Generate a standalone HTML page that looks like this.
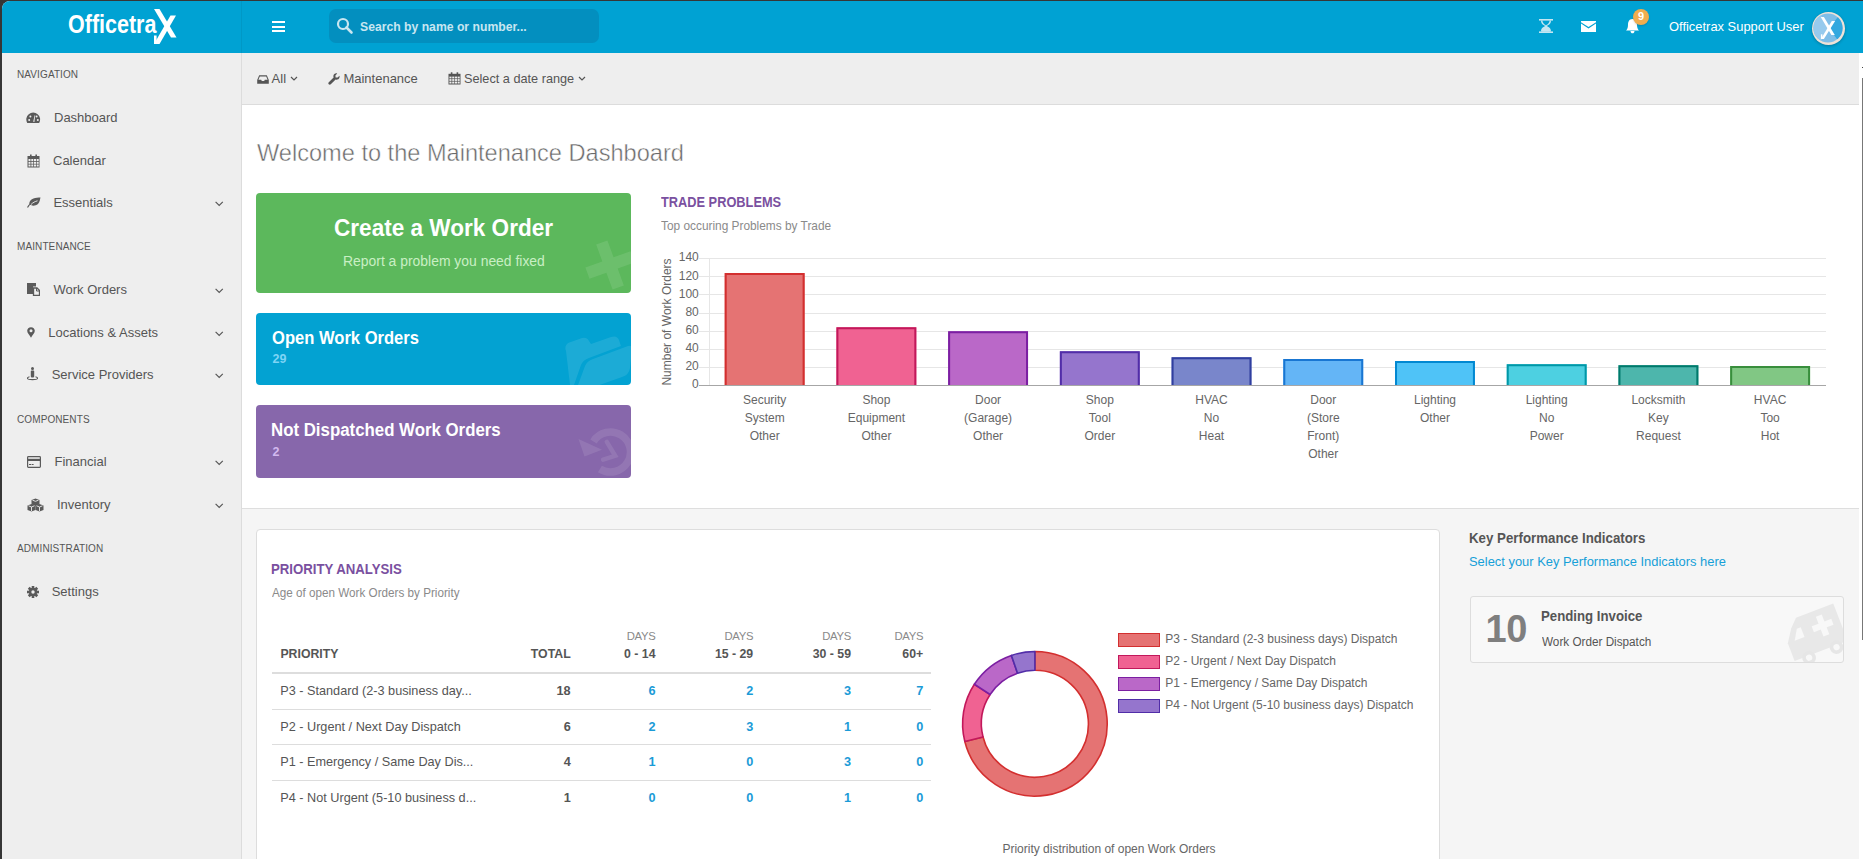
<!DOCTYPE html>
<html><head><meta charset="utf-8">
<style>
*{box-sizing:border-box;margin:0;padding:0}
html,body{width:1863px;height:859px;overflow:hidden;background:#363636;font-family:"Liberation Sans",sans-serif}
.a{position:absolute}
.t{position:absolute;white-space:nowrap;line-height:1}
#bg{position:absolute;left:2px;top:1px;width:1861px;height:858px;background:#fff;border-top-left-radius:8px}
#hdr{position:absolute;left:2px;top:1px;width:1861px;height:52px;background:#00a2d3;border-top-left-radius:8px}
#side{position:absolute;left:2px;top:53px;width:240px;height:806px;background:#eeeeee;border-right:1px solid #dcdcdc}
#sub{position:absolute;left:242px;top:53px;width:1617px;height:52px;background:#eeeeee;border-bottom:1px solid #dcdcdc}
#main{position:absolute;left:242px;top:105px;width:1617px;height:404px;background:#fff;border-bottom:1px solid #dedede}
#lower{position:absolute;left:242px;top:509px;width:1617px;height:350px;background:#f5f5f5}
.navh{position:absolute;left:17px;font-size:10px;color:#555;letter-spacing:0.1px;line-height:1}
.navi{position:absolute;font-size:13px;color:#555;line-height:1;white-space:nowrap}
.chev{position:absolute;left:215px}
</style></head><body>
<div id="bg"></div>
<div id="hdr"></div>
<div id="side"></div>
<div id="sub"></div>
<div id="main"></div>
<div id="lower"></div>

<!-- HEADER -->
<div class="t" style="left:68px;top:12px;font-size:25px;font-weight:700;color:#fff;transform-origin:0 0;transform:scaleX(0.86)">Officetra</div>
<svg class="a" style="left:150px;top:5px" width="32" height="44" viewBox="150 5 32 44"><polygon fill="#fff" points="154,9 159.5,9 176.5,37.5 171,37.5"/><polygon fill="#fff" points="170.5,15.5 176,15.5 159.5,44 154,44"/><polygon fill="#fff" points="154,35.5 156.6,35.5 156.6,44 154,44"/></svg>
<div class="a" style="left:241px;top:1px;width:1px;height:52px;background:rgba(0,0,0,0.06)"></div>
<div class="a" style="left:272px;top:21px;width:13px;height:2px;background:#fff"></div>
<div class="a" style="left:272px;top:25.5px;width:13px;height:2px;background:#fff"></div>
<div class="a" style="left:272px;top:30px;width:13px;height:2px;background:#fff"></div>
<div class="a" style="left:329px;top:9px;width:270px;height:34px;background:#038fbf;border-radius:7px"></div>
<svg class="a" style="left:336px;top:17px" width="18" height="18" viewBox="0 0 18 18"><circle cx="7" cy="7" r="5" fill="none" stroke="#c8e6f1" stroke-width="2.2"/><line x1="10.5" y1="10.5" x2="15.5" y2="15.5" stroke="#c8e6f1" stroke-width="2.6" stroke-linecap="round"/></svg>
<div class="t" style="left:360.43px;top:20.78px;font-size:12.61px;font-weight:700;color:#c8e6f1;transform-origin:0 0;transform:scaleX(0.967)">Search by name or number...</div>
<svg class="a" style="left:1538px;top:18px" width="16" height="16" viewBox="0 0 16 16"><rect x="1" y="1" width="14" height="1.6" fill="#c4e6f2"/><rect x="1" y="13.4" width="14" height="1.6" fill="#c4e6f2"/><path d="M3,2.5 C3,7 6.5,7 7,8 C6.5,9 3,9 3,13.5 L13,13.5 C13,9 9.5,9 9,8 C9.5,7 13,7 13,2.5 L11.5,2.5 C11.5,6 8.5,6.5 8,7.5 C7.5,6.5 4.5,6 4.5,2.5 Z" fill="#c4e6f2"/><path d="M4.3,13.4 C4.5,10.5 7,10 8,9.5 C9,10 11.5,10.5 11.7,13.4Z" fill="#c4e6f2"/></svg>
<svg class="a" style="left:1581px;top:21px" width="15" height="11" viewBox="0 0 15 11"><path d="M0,0 H15 V1.2 L7.5,6 L0,1.2Z" fill="#fff"/><path d="M0,2.6 L7.5,7.4 L15,2.6 V11 H0Z" fill="#fff"/></svg>
<svg class="a" style="left:1625px;top:18px" width="15" height="16" viewBox="0 0 15 16"><path d="M7.5,1 C4,1 3,4 3,7 C3,10 2,11.5 1,12.5 H14 C13,11.5 12,10 12,7 C12,4 11,1 7.5,1Z" fill="#fff"/><path d="M5.5,13 H9.5 C9.5,14.5 8.5,15.3 7.5,15.3 C6.5,15.3 5.5,14.5 5.5,13Z" fill="#fff"/></svg>
<div class="a" style="left:1633px;top:8.5px;width:16px;height:16px;border-radius:50%;background:#f0ad4e;box-shadow:0 1px 2px rgba(0,0,0,0.15)"></div>
<div class="t" style="left:1633px;top:10.9px;width:16px;text-align:center;font-size:11px;font-weight:700;color:#fff">9</div>
<div class="t" style="left:1669.15px;top:19.67px;font-size:13.33px;color:#fff;transform-origin:0 0;transform:scaleX(0.969)">Officetrax Support User</div>
<div class="a" style="left:1811.5px;top:11.5px;width:33px;height:33px;border-radius:50%;background:#efe2d8;box-shadow:0 1px 3px rgba(0,0,0,0.25)"></div>
<svg class="a" style="left:1812px;top:12px" width="32" height="32" viewBox="0 0 32 32"><defs><clipPath id="avc"><circle cx="16" cy="16" r="14.6"/></clipPath></defs><g clip-path="url(#avc)"><rect x="0" y="0" width="32" height="32" fill="#7fbee8"/><polygon points="16,16 -2,-17 -20,-17 -20,49 -2,49" fill="#97caed"/><polygon points="17,16 34,-5 50,-5 50,49 32,37" fill="#33a8df"/></g><polygon fill="#fff" points="8.7,4.9 11.9,4.9 22.8,23.1 19.4,23.1"/><polygon fill="#fff" points="19.8,9.1 23.1,9.1 11.9,26.9 8.9,26.9"/><polygon fill="#fff" points="8.9,22.3 10.4,22.3 10.4,26.9 8.9,26.9"/></svg>


<!-- SIDEBAR -->
<div class="navh" style="top:70.1px">NAVIGATION</div>
<div class="navh" style="top:242.2px">MAINTENANCE</div>
<div class="navh" style="top:414.9px">COMPONENTS</div>
<div class="navh" style="top:543.7px">ADMINISTRATION</div>
<div class="navi" style="left:54px;top:111px">Dashboard</div>
<div class="navi" style="left:53px;top:153.7px">Calendar</div>
<div class="navi" style="left:53.4px;top:196.3px">Essentials</div>
<div class="navi" style="left:53.5px;top:283.2px">Work Orders</div>
<div class="navi" style="left:48.2px;top:325.7px">Locations &amp; Assets</div>
<div class="navi" style="left:51.7px;top:368.3px">Service Providers</div>
<div class="navi" style="left:54.5px;top:455.2px">Financial</div>
<div class="navi" style="left:57px;top:498.2px">Inventory</div>
<div class="navi" style="left:51.7px;top:585.1px">Settings</div>
<svg class="a" style="left:215px;top:200.5px" width="9" height="6" viewBox="0 0 9 6"><path d="M0.6,0.8 L4.2,4.4 L7.8,0.8" fill="none" stroke="#555" stroke-width="1.15"/></svg><svg class="a" style="left:215px;top:287.5px" width="9" height="6" viewBox="0 0 9 6"><path d="M0.6,0.8 L4.2,4.4 L7.8,0.8" fill="none" stroke="#555" stroke-width="1.15"/></svg><svg class="a" style="left:215px;top:330.5px" width="9" height="6" viewBox="0 0 9 6"><path d="M0.6,0.8 L4.2,4.4 L7.8,0.8" fill="none" stroke="#555" stroke-width="1.15"/></svg><svg class="a" style="left:215px;top:372.5px" width="9" height="6" viewBox="0 0 9 6"><path d="M0.6,0.8 L4.2,4.4 L7.8,0.8" fill="none" stroke="#555" stroke-width="1.15"/></svg><svg class="a" style="left:215px;top:459.5px" width="9" height="6" viewBox="0 0 9 6"><path d="M0.6,0.8 L4.2,4.4 L7.8,0.8" fill="none" stroke="#555" stroke-width="1.15"/></svg><svg class="a" style="left:215px;top:502.5px" width="9" height="6" viewBox="0 0 9 6"><path d="M0.6,0.8 L4.2,4.4 L7.8,0.8" fill="none" stroke="#555" stroke-width="1.15"/></svg>
<svg class="a" style="left:26px;top:112px" width="15" height="12" viewBox="0 0 15 12"><path d="M1.25,11 A6.9,6.9 0 1 1 13.15,11 Z" fill="#5a5a5a"/><circle cx="3.2" cy="8" r="1" fill="#eee"/><circle cx="4.4" cy="4.6" r="1" fill="#eee"/><circle cx="10.6" cy="4.6" r="1" fill="#eee"/><circle cx="11.8" cy="8" r="1" fill="#eee"/><path d="M7.2,9.8 L8.6,3.2 L9.2,3.4 L8.4,10Z" fill="#eee"/></svg>
<svg class="a" style="left:27px;top:153.5px" width="13" height="14" viewBox="0 0 13 14"><rect x="0.5" y="2" width="12" height="11.5" fill="#5a5a5a"/><rect x="3" y="0.5" width="1.6" height="3" fill="#5a5a5a"/><rect x="8.4" y="0.5" width="1.6" height="3" fill="#5a5a5a"/><g fill="#eee"><rect x="1.5" y="5" width="2" height="2"/><rect x="4.3" y="5" width="2" height="2"/><rect x="7" y="5" width="2" height="2"/><rect x="9.7" y="5" width="2" height="2"/><rect x="1.5" y="7.8" width="2" height="2"/><rect x="4.3" y="7.8" width="2" height="2"/><rect x="7" y="7.8" width="2" height="2"/><rect x="9.7" y="7.8" width="2" height="2"/><rect x="1.5" y="10.5" width="2" height="2"/><rect x="4.3" y="10.5" width="2" height="2"/><rect x="7" y="10.5" width="2" height="2"/><rect x="9.7" y="10.5" width="2" height="2"/></g></svg>
<svg class="a" style="left:27px;top:196.5px" width="14" height="11" viewBox="0 0 14 11"><path d="M13.5,0.5 C9,0.5 3,1 2.2,6.5 C3.5,9 8,9.5 11,7 C13,5 13,2 13.5,0.5Z" fill="#5a5a5a"/><path d="M0.5,10.5 C2.5,7 6,4.5 10,3.5" stroke="#5a5a5a" stroke-width="1.2" fill="none"/><path d="M4,7.5 C6,5.5 8,4.5 10.5,3.8" stroke="#eee" stroke-width="0.9" fill="none"/></svg>
<svg class="a" style="left:27px;top:283px" width="13" height="13" viewBox="0 0 13 13"><path d="M0,0 H9 V3.5 H6 V11 H0Z" fill="#5a5a5a"/><path d="M6.5,5 H10 L12.5,7.5 V12.5 H6.5Z" fill="none" stroke="#5a5a5a" stroke-width="1.3"/><path d="M9.5,5 V8 H12.5" fill="none" stroke="#5a5a5a" stroke-width="1"/></svg>
<svg class="a" style="left:27px;top:327px" width="8" height="11" viewBox="0 0 8 11"><path d="M4,0.2 C1.8,0.2 0.2,1.8 0.2,3.8 C0.2,6 2.5,8 4,10.8 C5.5,8 7.8,6 7.8,3.8 C7.8,1.8 6.2,0.2 4,0.2Z" fill="#5a5a5a"/><circle cx="4" cy="3.8" r="1.5" fill="#eee"/></svg>
<svg class="a" style="left:26.5px;top:367px" width="11" height="14" viewBox="0 0 11 14"><circle cx="5.5" cy="1.6" r="1.5" fill="#5a5a5a"/><rect x="3.8" y="3.6" width="3.4" height="6.8" rx="0.8" fill="#5a5a5a"/><path d="M2.5,9.8 C0.8,10.3 0.3,11 0.5,11.6 C1,13 10,13 10.5,11.6 C10.7,11 10.2,10.3 8.5,9.8" fill="none" stroke="#5a5a5a" stroke-width="1.1"/></svg>
<svg class="a" style="left:27px;top:455.5px" width="14" height="12" viewBox="0 0 14 12"><rect x="0.6" y="0.6" width="12.8" height="10.8" rx="0.8" fill="none" stroke="#5a5a5a" stroke-width="1.2"/><rect x="0.6" y="2.8" width="12.8" height="2.2" fill="#5a5a5a"/><rect x="2" y="8" width="2" height="1" fill="#5a5a5a"/><rect x="4.6" y="8" width="2" height="1" fill="#5a5a5a"/></svg>
<svg class="a" style="left:26.5px;top:497.5px" width="17" height="14" viewBox="0 0 17 14"><path d="M8.5,0.5 L12.5,2 V6.5 L8.5,8 L4.5,6.5 V2Z" fill="#5a5a5a"/><path d="M4.5,6 L8.5,7.5 V12 L4.5,13.5 L0.5,12 V7.5Z" fill="#5a5a5a"/><path d="M12.5,6 L16.5,7.5 V12 L12.5,13.5 L8.5,12 V7.5Z" fill="#5a5a5a"/><path d="M5.5,2.2 L8.5,3.3 L11.5,2.2 M1.5,7.8 L4.5,9 L7.5,7.8 M9.5,7.8 L12.5,9 L15.5,7.8 M4.5,9 V13 M12.5,9 V13" stroke="#eee" stroke-width="0.9" fill="none"/></svg>
<svg class="a" style="left:26.5px;top:585.5px" width="12" height="12" viewBox="0 0 12 12"><g transform="translate(6,6)" fill="#5a5a5a"><circle r="4.2"/><rect x="-1.3" y="-6" width="2.6" height="12"/><rect x="-6" y="-1.3" width="12" height="2.6"/><rect x="-1.3" y="-6" width="2.6" height="12" transform="rotate(45)"/><rect x="-1.3" y="-6" width="2.6" height="12" transform="rotate(-45)"/></g><circle cx="6" cy="6" r="1.7" fill="#eee"/></svg>


<!-- SUBHEADER -->
<svg class="a" style="left:256.5px;top:74.5px" width="12" height="9" viewBox="0 0 12 9"><path d="M2.2,0.3 H9.8 L11.8,5 V8.7 H0.2 V5Z" fill="#555"/><path d="M2.8,1.5 H9.2 L10.6,4.8 H7.8 L7.2,6 H4.8 L4.2,4.8 H1.4Z" fill="#eee"/></svg>
<div class="navi" style="left:271.6px;top:72px">All</div>
<svg class="a" style="left:290px;top:76px" width="8" height="5" viewBox="0 0 8 5"><path d="M1,1 L4,4 L7,1" fill="none" stroke="#555" stroke-width="1.2"/></svg>
<svg class="a" style="left:328px;top:72.5px" width="12" height="12" viewBox="0 0 12 12"><path d="M11.5,2.8 L9.6,4.6 L7.6,4.4 L7.4,2.4 L9.2,0.5 C7.4,0 5.6,1 5.4,2.8 C5.3,3.4 5.4,4 5.6,4.4 L0.8,9.2 C0.2,9.8 0.2,10.8 0.8,11.3 C1.3,11.8 2.2,11.8 2.8,11.2 L7.6,6.4 C8,6.6 8.6,6.7 9.2,6.6 C11,6.4 12,4.6 11.5,2.8Z" fill="#555"/></svg>
<div class="navi" style="left:343.4px;top:72px">Maintenance</div>
<svg class="a" style="left:447.5px;top:72px" width="13" height="13" viewBox="0 0 13 13"><rect x="0.5" y="1.8" width="12" height="10.7" fill="#555"/><rect x="2.8" y="0.3" width="1.6" height="2.8" fill="#555"/><rect x="8.6" y="0.3" width="1.6" height="2.8" fill="#555"/><g fill="#eee"><rect x="1.4" y="4.6" width="2.1" height="1.8"/><rect x="4.2" y="4.6" width="2.1" height="1.8"/><rect x="6.9" y="4.6" width="2.1" height="1.8"/><rect x="9.6" y="4.6" width="2.1" height="1.8"/><rect x="1.4" y="7.1" width="2.1" height="1.8"/><rect x="4.2" y="7.1" width="2.1" height="1.8"/><rect x="6.9" y="7.1" width="2.1" height="1.8"/><rect x="9.6" y="7.1" width="2.1" height="1.8"/><rect x="1.4" y="9.6" width="2.1" height="1.9"/><rect x="4.2" y="9.6" width="2.1" height="1.9"/><rect x="6.9" y="9.6" width="2.1" height="1.9"/><rect x="9.6" y="9.6" width="2.1" height="1.9"/></g></svg>
<div class="navi" style="left:463.7px;top:72px;transform-origin:0 0;transform:scaleX(0.977)">Select a date range</div>
<svg class="a" style="left:577.5px;top:76px" width="8" height="5" viewBox="0 0 8 5"><path d="M1,1 L4,4 L7,1" fill="none" stroke="#555" stroke-width="1.2"/></svg>
<!-- right scroll line -->
<div class="a" style="left:1862px;top:67px;width:1px;height:1px;background:#444"></div>
<div class="a" style="left:1862px;top:78px;width:1px;height:562px;background:#777"></div>


<!-- MAIN PANEL -->
<div class="t" style="left:256.56px;top:141.79px;font-size:23.19px;color:#6a6a6a;transform-origin:0 0;transform:scaleX(1.017);-webkit-text-stroke:0.45px #fff">Welcome to the Maintenance Dashboard</div>
<div class="a" style="left:256px;top:193px;width:375px;height:100px;background:#5cb85c;border-radius:4px;overflow:hidden">
  <svg class="a" style="left:0;top:0" width="375" height="100" viewBox="0 0 375 100"><g transform="translate(354,72) rotate(-20)"><path d="M-6,-24 H6 V-6 H24 V6 H6 V24 H-6 V6 H-24 V-6 H-6Z" fill="rgba(255,255,255,0.1)" stroke="rgba(255,255,255,0.1)" stroke-width="0" /></g></svg>
</div>
<div class="t" style="left:333.70px;top:215.60px;font-size:24.35px;font-weight:700;color:#fff;transform-origin:0 0;transform:scaleX(0.927)">Create a Work Order</div>
<div class="t" style="left:342.89px;top:253.07px;font-size:15.20px;color:#c9efc4;transform-origin:0 0;transform:scaleX(0.916)">Report a problem you need fixed</div>

<div class="a" style="left:256px;top:313px;width:375px;height:72px;background:#03a2d2;border-radius:4px;overflow:hidden"><svg class="a" style="left:0;top:0" width="375" height="72" viewBox="0 0 375 72"><g fill="rgba(255,255,255,0.1)"><path d="M310,38 Q308,33 312,30 L326,25 Q331,24 333,28 L335,31 L355,24 Q361,22 363,27 L365,33 L333,45 Q327,47 325,52 L318,72 L314,72Z"/><path d="M322,72 L329,53 Q331,48 337,46 L372,33 Q377,32 376,37 L374,55 Q373,62 366,64 L338,74Z"/></g></svg></div>
<div class="t" style="left:271.94px;top:329.11px;font-size:18.80px;font-weight:700;color:#fff;transform-origin:0 0;transform:scaleX(0.882)">Open Work Orders</div>
<div class="t" style="left:272.5px;top:353.0px;font-size:12.5px;font-weight:700;color:#7ed4f5">29</div>

<div class="a" style="left:256px;top:405px;width:375px;height:73px;background:#8767ab;border-radius:4px;overflow:hidden"><svg class="a" style="left:0;top:0" width="375" height="73" viewBox="0 0 375 73"><g fill="none" stroke="rgba(255,255,255,0.1)"><path d="M337.5,36.4 A20,20 0 1 1 343.9,64" stroke-width="7.5"/><path d="M350.8,36.9 L359.2,50.8 L347.1,54.6" stroke-width="4.5" stroke-linecap="round"/></g><path d="M322.5,34 L346,44.8 L328.5,51.5Z" fill="rgba(255,255,255,0.1)" stroke="rgba(255,255,255,0.0)" stroke-linejoin="round"/></svg></div>
<div class="t" style="left:271.32px;top:421.36px;font-size:18.80px;font-weight:700;color:#fff;transform-origin:0 0;transform:scaleX(0.896)">Not Dispatched Work Orders</div>
<div class="t" style="left:272.5px;top:445.5px;font-size:12.5px;font-weight:700;color:#d2b9ef">2</div>

<div class="t" style="left:660.97px;top:194.65px;font-size:14.45px;font-weight:700;color:#7a50a0;transform-origin:0 0;transform:scaleX(0.886)">TRADE PROBLEMS</div>
<div class="t" style="left:660.86px;top:220.39px;font-size:12.60px;color:#8a8a8a;transform-origin:0 0;transform:scaleX(0.942)">Top occuring Problems by Trade</div>


<!-- CHART -->
<svg class="a" style="left:0;top:0" width="1863" height="500" viewBox="0 0 1863 500">
<line x1="699" y1="367.5" x2="1826" y2="367.5" stroke="#e6e6e6" stroke-width="1"/>
<line x1="699" y1="349.5" x2="1826" y2="349.5" stroke="#e6e6e6" stroke-width="1"/>
<line x1="699" y1="331.5" x2="1826" y2="331.5" stroke="#e6e6e6" stroke-width="1"/>
<line x1="699" y1="313.5" x2="1826" y2="313.5" stroke="#e6e6e6" stroke-width="1"/>
<line x1="699" y1="294.5" x2="1826" y2="294.5" stroke="#e6e6e6" stroke-width="1"/>
<line x1="699" y1="276.5" x2="1826" y2="276.5" stroke="#e6e6e6" stroke-width="1"/>
<line x1="699" y1="258.5" x2="1826" y2="258.5" stroke="#e6e6e6" stroke-width="1"/>
<line x1="709.5" y1="258" x2="709.5" y2="385" stroke="#e6e6e6" stroke-width="1"/>
<text x="698.8" y="388.4" text-anchor="end" font-size="12" fill="#666" font-family="Liberation Sans">0</text>
<text x="698.8" y="370.2" text-anchor="end" font-size="12" fill="#666" font-family="Liberation Sans">20</text>
<text x="698.8" y="352.1" text-anchor="end" font-size="12" fill="#666" font-family="Liberation Sans">40</text>
<text x="698.8" y="333.9" text-anchor="end" font-size="12" fill="#666" font-family="Liberation Sans">60</text>
<text x="698.8" y="315.8" text-anchor="end" font-size="12" fill="#666" font-family="Liberation Sans">80</text>
<text x="698.8" y="297.6" text-anchor="end" font-size="12" fill="#666" font-family="Liberation Sans">100</text>
<text x="698.8" y="279.5" text-anchor="end" font-size="12" fill="#666" font-family="Liberation Sans">120</text>
<text x="698.8" y="261.3" text-anchor="end" font-size="12" fill="#666" font-family="Liberation Sans">140</text>
<text transform="translate(670.5,322) rotate(-90)" text-anchor="middle" font-size="12" fill="#666" font-family="Liberation Sans">Number of Work Orders</text>
<rect x="724.70" y="273.10" width="79.9" height="111.90" fill="#e57373"/>
<path d="M725.70,385 V274.10 H803.60 V385" fill="none" stroke="#d32f2f" stroke-width="2"/>
<text x="764.7" y="404.3" text-anchor="middle" font-size="12" fill="#666" font-family="Liberation Sans">Security</text>
<text x="764.7" y="422.3" text-anchor="middle" font-size="12" fill="#666" font-family="Liberation Sans">System</text>
<text x="764.7" y="440.3" text-anchor="middle" font-size="12" fill="#666" font-family="Liberation Sans">Other</text>
<rect x="836.42" y="327.30" width="79.9" height="57.70" fill="#f06292"/>
<path d="M837.42,385 V328.30 H915.32 V385" fill="none" stroke="#c2185b" stroke-width="2"/>
<text x="876.4" y="404.3" text-anchor="middle" font-size="12" fill="#666" font-family="Liberation Sans">Shop</text>
<text x="876.4" y="422.3" text-anchor="middle" font-size="12" fill="#666" font-family="Liberation Sans">Equipment</text>
<text x="876.4" y="440.3" text-anchor="middle" font-size="12" fill="#666" font-family="Liberation Sans">Other</text>
<rect x="948.14" y="331.30" width="79.9" height="53.70" fill="#ba68c8"/>
<path d="M949.14,385 V332.30 H1027.04 V385" fill="none" stroke="#7b1fa2" stroke-width="2"/>
<text x="988.1" y="404.3" text-anchor="middle" font-size="12" fill="#666" font-family="Liberation Sans">Door</text>
<text x="988.1" y="422.3" text-anchor="middle" font-size="12" fill="#666" font-family="Liberation Sans">(Garage)</text>
<text x="988.1" y="440.3" text-anchor="middle" font-size="12" fill="#666" font-family="Liberation Sans">Other</text>
<rect x="1059.86" y="351.30" width="79.9" height="33.70" fill="#9575cd"/>
<path d="M1060.86,385 V352.30 H1138.76 V385" fill="none" stroke="#512da8" stroke-width="2"/>
<text x="1099.8" y="404.3" text-anchor="middle" font-size="12" fill="#666" font-family="Liberation Sans">Shop</text>
<text x="1099.8" y="422.3" text-anchor="middle" font-size="12" fill="#666" font-family="Liberation Sans">Tool</text>
<text x="1099.8" y="440.3" text-anchor="middle" font-size="12" fill="#666" font-family="Liberation Sans">Order</text>
<rect x="1171.58" y="357.20" width="79.9" height="27.80" fill="#7986cb"/>
<path d="M1172.58,385 V358.20 H1250.48 V385" fill="none" stroke="#303f9f" stroke-width="2"/>
<text x="1211.5" y="404.3" text-anchor="middle" font-size="12" fill="#666" font-family="Liberation Sans">HVAC</text>
<text x="1211.5" y="422.3" text-anchor="middle" font-size="12" fill="#666" font-family="Liberation Sans">No</text>
<text x="1211.5" y="440.3" text-anchor="middle" font-size="12" fill="#666" font-family="Liberation Sans">Heat</text>
<rect x="1283.30" y="359.10" width="79.9" height="25.90" fill="#64b5f6"/>
<path d="M1284.30,385 V360.10 H1362.20 V385" fill="none" stroke="#1976d2" stroke-width="2"/>
<text x="1323.3" y="404.3" text-anchor="middle" font-size="12" fill="#666" font-family="Liberation Sans">Door</text>
<text x="1323.3" y="422.3" text-anchor="middle" font-size="12" fill="#666" font-family="Liberation Sans">(Store</text>
<text x="1323.3" y="440.3" text-anchor="middle" font-size="12" fill="#666" font-family="Liberation Sans">Front)</text>
<text x="1323.3" y="458.3" text-anchor="middle" font-size="12" fill="#666" font-family="Liberation Sans">Other</text>
<rect x="1395.02" y="361.10" width="79.9" height="23.90" fill="#4fc3f7"/>
<path d="M1396.02,385 V362.10 H1473.92 V385" fill="none" stroke="#0288d1" stroke-width="2"/>
<text x="1435.0" y="404.3" text-anchor="middle" font-size="12" fill="#666" font-family="Liberation Sans">Lighting</text>
<text x="1435.0" y="422.3" text-anchor="middle" font-size="12" fill="#666" font-family="Liberation Sans">Other</text>
<rect x="1506.74" y="364.20" width="79.9" height="20.80" fill="#4dd0e1"/>
<path d="M1507.74,385 V365.20 H1585.64 V385" fill="none" stroke="#0097a7" stroke-width="2"/>
<text x="1546.7" y="404.3" text-anchor="middle" font-size="12" fill="#666" font-family="Liberation Sans">Lighting</text>
<text x="1546.7" y="422.3" text-anchor="middle" font-size="12" fill="#666" font-family="Liberation Sans">No</text>
<text x="1546.7" y="440.3" text-anchor="middle" font-size="12" fill="#666" font-family="Liberation Sans">Power</text>
<rect x="1618.46" y="365.20" width="79.9" height="19.80" fill="#4db6ac"/>
<path d="M1619.46,385 V366.20 H1697.36 V385" fill="none" stroke="#00796b" stroke-width="2"/>
<text x="1658.4" y="404.3" text-anchor="middle" font-size="12" fill="#666" font-family="Liberation Sans">Locksmith</text>
<text x="1658.4" y="422.3" text-anchor="middle" font-size="12" fill="#666" font-family="Liberation Sans">Key</text>
<text x="1658.4" y="440.3" text-anchor="middle" font-size="12" fill="#666" font-family="Liberation Sans">Request</text>
<rect x="1730.18" y="366.00" width="79.9" height="19.00" fill="#81c784"/>
<path d="M1731.18,385 V367.00 H1809.08 V385" fill="none" stroke="#388e3c" stroke-width="2"/>
<text x="1770.1" y="404.3" text-anchor="middle" font-size="12" fill="#666" font-family="Liberation Sans">HVAC</text>
<text x="1770.1" y="422.3" text-anchor="middle" font-size="12" fill="#666" font-family="Liberation Sans">Too</text>
<text x="1770.1" y="440.3" text-anchor="middle" font-size="12" fill="#666" font-family="Liberation Sans">Hot</text>
<line x1="699" y1="385.5" x2="1826" y2="385.5" stroke="#a6a6a6" stroke-width="1"/>
</svg>
<!-- LOWER -->
<div class="a" style="left:256px;top:529px;width:1184px;height:400px;background:#fff;border:1px solid #dddddd;border-radius:4px"></div>
<div class="t" style="left:271.28px;top:561.80px;font-size:14.45px;font-weight:700;color:#7a50a0;transform-origin:0 0;transform:scaleX(0.914)">PRIORITY ANALYSIS</div>
<div class="t" style="left:272.20px;top:587.19px;font-size:12.60px;color:#8a8a8a;transform-origin:0 0;transform:scaleX(0.928)">Age of open Work Orders by Priority</div>
<div class="t" style="left:280.4px;top:648.13px;font-size:12.3px;font-weight:700;color:#555">PRIORITY</div>
<div class="t" style="left:470.70000000000005px;width:100px;text-align:right;top:648.13px;font-size:12.3px;font-weight:700;color:#555">TOTAL</div>
<div class="t" style="left:555.5px;width:100px;text-align:right;top:648.13px;font-size:12.3px;font-weight:700;color:#555">0 - 14</div>
<div class="t" style="left:555.5px;width:100px;text-align:right;top:631.09px;font-size:11.3px;color:#8a8a8a;letter-spacing:-0.3px">DAYS</div>
<div class="t" style="left:653.2px;width:100px;text-align:right;top:648.13px;font-size:12.3px;font-weight:700;color:#555">15 - 29</div>
<div class="t" style="left:653.2px;width:100px;text-align:right;top:631.09px;font-size:11.3px;color:#8a8a8a;letter-spacing:-0.3px">DAYS</div>
<div class="t" style="left:751px;width:100px;text-align:right;top:648.13px;font-size:12.3px;font-weight:700;color:#555">30 - 59</div>
<div class="t" style="left:751px;width:100px;text-align:right;top:631.09px;font-size:11.3px;color:#8a8a8a;letter-spacing:-0.3px">DAYS</div>
<div class="t" style="left:823.2px;width:100px;text-align:right;top:648.13px;font-size:12.3px;font-weight:700;color:#555">60+</div>
<div class="t" style="left:823.2px;width:100px;text-align:right;top:631.09px;font-size:11.3px;color:#8a8a8a;letter-spacing:-0.3px">DAYS</div>
<div class="a" style="left:272px;top:672px;width:659px;height:2px;background:#dddddd"></div>
<div class="a" style="left:272px;top:709px;width:659px;height:1px;background:#dddddd"></div>
<div class="a" style="left:272px;top:744px;width:659px;height:1px;background:#dddddd"></div>
<div class="a" style="left:272px;top:780px;width:659px;height:1px;background:#dddddd"></div>
<div class="t" style="left:280.2px;top:684.89px;font-size:12.7px;color:#555">P3 - Standard (2-3 business day...</div>
<div class="t" style="left:470.70000000000005px;width:100px;text-align:right;top:684.89px;font-size:12.7px;font-weight:700;color:#555">18</div>
<div class="t" style="left:555.5px;width:100px;text-align:right;top:684.89px;font-size:12.7px;font-weight:700;color:#1b9bd7">6</div>
<div class="t" style="left:653.2px;width:100px;text-align:right;top:684.89px;font-size:12.7px;font-weight:700;color:#1b9bd7">2</div>
<div class="t" style="left:751px;width:100px;text-align:right;top:684.89px;font-size:12.7px;font-weight:700;color:#1b9bd7">3</div>
<div class="t" style="left:823.2px;width:100px;text-align:right;top:684.89px;font-size:12.7px;font-weight:700;color:#1b9bd7">7</div>
<div class="t" style="left:280.2px;top:720.99px;font-size:12.7px;color:#555">P2 - Urgent / Next Day Dispatch</div>
<div class="t" style="left:470.70000000000005px;width:100px;text-align:right;top:720.99px;font-size:12.7px;font-weight:700;color:#555">6</div>
<div class="t" style="left:555.5px;width:100px;text-align:right;top:720.99px;font-size:12.7px;font-weight:700;color:#1b9bd7">2</div>
<div class="t" style="left:653.2px;width:100px;text-align:right;top:720.99px;font-size:12.7px;font-weight:700;color:#1b9bd7">3</div>
<div class="t" style="left:751px;width:100px;text-align:right;top:720.99px;font-size:12.7px;font-weight:700;color:#1b9bd7">1</div>
<div class="t" style="left:823.2px;width:100px;text-align:right;top:720.99px;font-size:12.7px;font-weight:700;color:#1b9bd7">0</div>
<div class="t" style="left:280.2px;top:755.99px;font-size:12.7px;color:#555">P1 - Emergency / Same Day Dis...</div>
<div class="t" style="left:470.70000000000005px;width:100px;text-align:right;top:755.99px;font-size:12.7px;font-weight:700;color:#555">4</div>
<div class="t" style="left:555.5px;width:100px;text-align:right;top:755.99px;font-size:12.7px;font-weight:700;color:#1b9bd7">1</div>
<div class="t" style="left:653.2px;width:100px;text-align:right;top:755.99px;font-size:12.7px;font-weight:700;color:#1b9bd7">0</div>
<div class="t" style="left:751px;width:100px;text-align:right;top:755.99px;font-size:12.7px;font-weight:700;color:#1b9bd7">3</div>
<div class="t" style="left:823.2px;width:100px;text-align:right;top:755.99px;font-size:12.7px;font-weight:700;color:#1b9bd7">0</div>
<div class="t" style="left:280.2px;top:791.99px;font-size:12.7px;color:#555">P4 - Not Urgent (5-10 business d...</div>
<div class="t" style="left:470.70000000000005px;width:100px;text-align:right;top:791.99px;font-size:12.7px;font-weight:700;color:#555">1</div>
<div class="t" style="left:555.5px;width:100px;text-align:right;top:791.99px;font-size:12.7px;font-weight:700;color:#1b9bd7">0</div>
<div class="t" style="left:653.2px;width:100px;text-align:right;top:791.99px;font-size:12.7px;font-weight:700;color:#1b9bd7">0</div>
<div class="t" style="left:751px;width:100px;text-align:right;top:791.99px;font-size:12.7px;font-weight:700;color:#1b9bd7">1</div>
<div class="t" style="left:823.2px;width:100px;text-align:right;top:791.99px;font-size:12.7px;font-weight:700;color:#1b9bd7">0</div>
<svg class="a" style="left:940px;top:630px" width="200" height="180" viewBox="940 630 200 180">
<path d="M1034.90,651.50 A72.3,72.3 0 1 1 964.81,741.55 L983.04,736.93 A53.5,53.5 0 1 0 1034.90,670.30 Z" fill="#e57373" stroke="#d32f2f" stroke-width="1.6" stroke-linejoin="round"/>
<path d="M964.81,741.55 A72.3,72.3 0 0 1 974.37,684.26 L990.11,694.54 A53.5,53.5 0 0 0 983.04,736.93 Z" fill="#f06292" stroke="#c2185b" stroke-width="1.6" stroke-linejoin="round"/>
<path d="M974.37,684.26 A72.3,72.3 0 0 1 1011.42,655.42 L1017.53,673.20 A53.5,53.5 0 0 0 990.11,694.54 Z" fill="#ba68c8" stroke="#7b1fa2" stroke-width="1.6" stroke-linejoin="round"/>
<path d="M1011.42,655.42 A72.3,72.3 0 0 1 1034.90,651.50 L1034.90,670.30 A53.5,53.5 0 0 0 1017.53,673.20 Z" fill="#9575cd" stroke="#512da8" stroke-width="1.6" stroke-linejoin="round"/>
</svg>
<div class="a" style="left:1118px;top:633px;width:42px;height:14px;background:#e57373;border:1px solid #d32f2f"></div>
<div class="t" style="left:1165.3px;top:632.54px;font-size:12px;color:#666">P3 - Standard (2-3 business days) Dispatch</div>
<div class="a" style="left:1118px;top:655px;width:42px;height:14px;background:#f06292;border:1px solid #c2185b"></div>
<div class="t" style="left:1165.3px;top:654.54px;font-size:12px;color:#666">P2 - Urgent / Next Day Dispatch</div>
<div class="a" style="left:1118px;top:677px;width:42px;height:14px;background:#ba68c8;border:1px solid #7b1fa2"></div>
<div class="t" style="left:1165.3px;top:676.54px;font-size:12px;color:#666">P1 - Emergency / Same Day Dispatch</div>
<div class="a" style="left:1118px;top:699px;width:42px;height:14px;background:#9575cd;border:1px solid #512da8"></div>
<div class="t" style="left:1165.3px;top:698.54px;font-size:12px;color:#666">P4 - Not Urgent (5-10 business days) Dispatch</div>
<div class="t" style="left:1002.4px;top:842.74px;font-size:12px;color:#666">Priority distribution of open Work Orders</div>
<div class="t" style="left:1468.67px;top:530.50px;font-size:14.45px;font-weight:700;color:#555;transform-origin:0 0;transform:scaleX(0.920)">Key Performance Indicators</div>
<div class="t" style="left:1468.95px;top:554.69px;font-size:13.19px;color:#16a0d8;transform-origin:0 0;transform:scaleX(0.979)">Select your Key Performance Indicators here</div>
<div class="a" style="left:1470px;top:596px;width:374px;height:67px;border:1px solid #dddddd;border-radius:3px;overflow:hidden;background:#f8f8f8"><svg class="a" style="left:310px;top:0" width="64" height="67" viewBox="0 0 64 67"><g transform="translate(37,37) rotate(-21) scale(1.05)" fill="#e8e8e8"><path d="M-14,-22 H24 V16 H-30 V-2 L-22,-14 Z"/><path d="M-23,-2 L-17,-12 H-13 V-2Z" fill="#f8f8f8"/><path d="M4,-16 H10 V-9 H17 V-3 H10 V4 H4 V-3 H-3 V-9 H4Z" fill="#f8f8f8"/><circle cx="-16" cy="18" r="6.5" fill="#e6e6e6"/><circle cx="-16" cy="18" r="3" fill="#f8f8f8"/><circle cx="12" cy="18" r="6.5" fill="#e6e6e6"/><circle cx="12" cy="18" r="3" fill="#f8f8f8"/></g></svg></div>
<div class="t" style="left:1485.5px;top:609.62px;font-size:38px;font-weight:700;color:#7f7f7f;letter-spacing:-0.5px">10</div>
<div class="t" style="left:1541.47px;top:608.70px;font-size:14.45px;font-weight:700;color:#555;transform-origin:0 0;transform:scaleX(0.916)">Pending Invoice</div>
<div class="t" style="left:1542.28px;top:636.08px;font-size:12.61px;color:#555;transform-origin:0 0;transform:scaleX(0.930)">Work Order Dispatch</div>
</body></html>
